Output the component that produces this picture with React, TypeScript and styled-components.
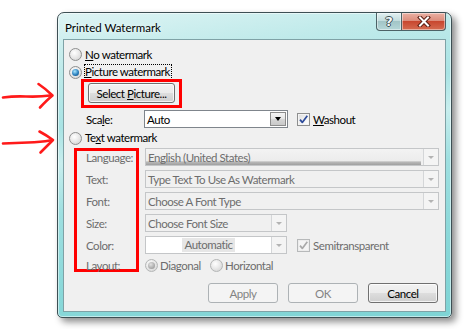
import React from "react";
import styled, { createGlobalStyle, css } from "styled-components";

const GlobalStyle = createGlobalStyle`
  html, body { margin: 0; padding: 0; background: #ffffff; }
  #root { width: 468px; height: 329px; overflow: hidden; }
`;

const FONT = `Lato, "Noto Sans", sans-serif`;

const Page = styled.div`
  position: relative;
  width: 468px;
  height: 329px;
  box-sizing: border-box;
  padding: 12px 0 0 57px;
  background: #ffffff;
  font-family: ${FONT};
  font-size: 11.5px;
  letter-spacing: -0.45px;
`;

const Annotations = styled.svg`
  position: absolute;
  left: 0;
  top: 0;
  width: 60px;
  height: 329px;
  pointer-events: none;
`;

const Window = styled.div`
  width: 395px;
  height: 306px;
  box-sizing: border-box;
  display: flex;
  flex-direction: column;
  padding: 0 5px 5px 5px;
  border: 1px solid #3d4f54;
  border-radius: 7px 7px 5px 5px;
  background: linear-gradient(
    172deg,
    #def4f4 0%,
    #bfeaea 16%,
    #a9e3e4 32%,
    #c8eeee 42%,
    #9edfe0 56%,
    #8ad8d9 78%,
    #7ed4d5 100%
  );
  box-shadow: inset 0 0 0 1px rgba(255, 255, 255, 0.5), 4px 4px 7px rgba(0, 0, 0, 0.45);
`;

const TitleBar = styled.div`
  height: 26px;
  display: flex;
  align-items: flex-start;
  justify-content: space-between;
`;

const Title = styled.div`
  font-size: 11.5px;
  line-height: 14px;
  letter-spacing: 0;
  color: #000;
  padding: 8px 0 0 2px;
  text-shadow: 0 0 5px rgba(255, 255, 255, 0.9);
`;

const CaptionButtons = styled.div`
  display: flex;
`;

const CaptionButton = styled.div<{ $variant: "help" | "close" }>`
  height: 18px;
  box-sizing: border-box;
  display: flex;
  align-items: center;
  justify-content: center;
  border: 1px solid #4c6266;
  border-top: none;
  box-shadow: inset 0 0 0 1px rgba(255, 255, 255, 0.45);
  ${(p) =>
    p.$variant === "help"
      ? css`
          width: 26px;
          border-radius: 0 0 0 4px;
          background: linear-gradient(#e2f0f1 0%, #c3dcdd 45%, #a2c5c7 50%, #b5d7d8 100%);
        `
      : css`
          width: 44px;
          border-left: none;
          border-radius: 0 0 4px 0;
          background: linear-gradient(#eab0a3 0%, #dc8d7c 45%, #c8472f 50%, #d56c51 100%);
        `}
`;

const HelpGlyph = styled.span`
  font-family: "DejaVu Sans", sans-serif;
  font-weight: bold;
  font-size: 13px;
  line-height: 13px;
  letter-spacing: 0;
  color: #f4f8f8;
  text-shadow: -1px 0 #3c5054, 1px 0 #3c5054, 0 -1px #3c5054, 0 1px #3c5054;
`;

const Client = styled.div`
  flex: 1;
  background: #f0f0f0;
  border: 1px solid #7fa2a6;
  padding: 6px 7px 0 5px;
  display: flex;
  flex-direction: column;
  color: #000;
`;

const OptionRow = styled.div<{ $h: number; $mt?: number }>`
  display: flex;
  align-items: center;
  gap: 2px;
  height: ${(p) => p.$h}px;
  margin-top: ${(p) => p.$mt ?? 0}px;
`;

const RadioCircle = styled.span<{ $checked?: boolean; $disabled?: boolean }>`
  width: 13px;
  height: 13px;
  box-sizing: border-box;
  border-radius: 50%;
  flex-shrink: 0;
  border: 1px solid ${(p) => (p.$disabled ? "#b4b6b6" : "#8e8f8f")};
  background: radial-gradient(circle at 40% 35%, #ffffff 0%, #eaeaea 45%, #cdcdcd 100%);
  display: flex;
  align-items: center;
  justify-content: center;
  &::after {
    content: "";
    width: 7px;
    height: 7px;
    border-radius: 50%;
    display: ${(p) => (p.$checked ? "block" : "none")};
    background: ${(p) =>
      p.$disabled
        ? "radial-gradient(circle at 40% 35%, #e2e2e2, #a4a4a4 70%, #8f8f8f)"
        : "radial-gradient(circle at 40% 35%, #a8e6ff, #2a7fbd 55%, #0d3f6b)"};
  }
`;

const OptionLabel = styled.span<{ $focused?: boolean; $disabled?: boolean }>`
  height: 16px;
  box-sizing: border-box;
  padding: 0 1px 0 0;
  line-height: 14px;
  display: flex;
  align-items: center;
  border: 1px ${(p) => (p.$focused ? "dotted #000" : "solid transparent")};
  color: ${(p) => (p.$disabled ? "#6d6d6d" : "#000")};
  white-space: nowrap;
`;

const Key = styled.span`
  text-decoration: underline;
  text-underline-offset: 1px;
`;

const Highlight = styled.div<{ $w: number; $h: number; $ml: number; $mt?: number }>`
  box-sizing: border-box;
  width: ${(p) => p.$w}px;
  height: ${(p) => p.$h}px;
  margin-left: ${(p) => p.$ml}px;
  margin-top: ${(p) => p.$mt ?? 0}px;
  border: 3px solid #ff0000;
  flex-shrink: 0;
`;

const PictureBox = styled(Highlight)`
  padding: 1px 0 0 4px;
`;

const PushButton = styled.div<{ $w: number; $disabled?: boolean }>`
  width: ${(p) => p.$w}px;
  height: 20px;
  box-sizing: border-box;
  border-radius: 3px;
  display: flex;
  align-items: center;
  justify-content: center;
  white-space: nowrap;
  ${(p) =>
    p.$disabled
      ? css`
          border: 1px solid #adb2b5;
          background: #f4f4f4;
          color: #838383;
        `
      : css`
          border: 1px solid #707070;
          background: linear-gradient(#f2f2f2 0%, #ebebeb 48%, #dddddd 52%, #cfcfcf 100%);
          box-shadow: inset 0 0 0 1px rgba(255, 255, 255, 0.75);
          color: #000;
        `}
`;

const FieldRow = styled.div<{ $mt?: number }>`
  display: flex;
  align-items: center;
  height: 18px;
  margin-top: ${(p) => p.$mt ?? 0}px;
`;

const FieldLabel = styled.span<{ $w: number; $ml: number }>`
  width: ${(p) => p.$w}px;
  margin-left: ${(p) => p.$ml}px;
  white-space: nowrap;
`;

type ComboTone = "enabled" | "disabled" | "list" | "white";

const Combo = styled.div<{ $w: number; $tone: ComboTone }>`
  width: ${(p) => p.$w}px;
  height: 18px;
  box-sizing: border-box;
  display: flex;
  flex-shrink: 0;
  border: 1px solid ${(p) => (p.$tone === "enabled" ? "#7f858c" : "#c4c6c8")};
  background: ${(p) => (p.$tone === "enabled" || p.$tone === "white" ? "#ffffff" : "#f0f0f0")};
  color: ${(p) => (p.$tone === "enabled" ? "#000" : "#6d6d6d")};
`;

const ComboText = styled.div<{ $tone: ComboTone }>`
  flex: 1;
  display: flex;
  align-items: center;
  padding-left: 2px;
  white-space: nowrap;
  overflow: hidden;
  ${(p) =>
    p.$tone === "list" &&
    css`
      background: linear-gradient(#f3f3f3 0%, #ececec 72%, #b8b8b8 82%, #9f9f9f 100%);
      margin-right: 2px;
    `}
  ${(p) =>
    p.$tone === "white" &&
    css`
      justify-content: center;
      padding-left: 0;
    `}
`;

const ColorName = styled.span`
  background: #e6e6e6;
  padding: 0 2px;
  line-height: 14px;
`;

const ComboArrow = styled.div<{ $enabled?: boolean }>`
  width: 15px;
  box-sizing: border-box;
  display: flex;
  align-items: center;
  justify-content: center;
  ${(p) =>
    p.$enabled
      ? css`
          border: 1px solid #8c8c8c;
          margin: 1px;
          width: 16px;
          background: linear-gradient(#f4f4f4 0%, #e6e6e6 48%, #d6d6d6 52%, #c9c9c9 100%);
          &::after {
            content: "";
            border-left: 3.5px solid transparent;
            border-right: 3.5px solid transparent;
            border-top: 4px solid #000;
          }
        `
      : css`
          border-left: 1px solid #d4d6d8;
          background: #f4f4f4;
          &::after {
            content: "";
            border-left: 3px solid transparent;
            border-right: 3px solid transparent;
            border-top: 3px solid #b3b3b3;
          }
        `}
`;

const CheckBox = styled.span<{ $disabled?: boolean; $ml: number }>`
  width: 13px;
  height: 13px;
  box-sizing: border-box;
  flex-shrink: 0;
  margin-left: ${(p) => p.$ml}px;
  border: 1px solid ${(p) => (p.$disabled ? "#b7b9ba" : "#8e8f8f")};
  background: ${(p) =>
    p.$disabled ? "#f4f4f4" : "linear-gradient(135deg, #dcdcdc 0%, #f4f4f4 60%, #ffffff 100%)"};
  box-shadow: inset 0 0 0 1px ${(p) => (p.$disabled ? "#ececec" : "#f4f4f4")};
  display: flex;
  align-items: center;
  justify-content: center;
`;

const CheckLabel = styled.span<{ $disabled?: boolean }>`
  margin-left: 3px;
  color: ${(p) => (p.$disabled ? "#6d6d6d" : "#000")};
  white-space: nowrap;
`;

const TextSection = styled.div`
  display: flex;
  margin-top: 1px;
`;

const LabelsBox = styled(Highlight)`
  padding-left: 9px;
  display: flex;
  flex-direction: column;
`;

const LabelList = styled.div`
  margin-top: -3px;
  display: flex;
  flex-direction: column;
  gap: 4px;
`;

const DisabledLabel = styled.div<{ $h: number }>`
  height: ${(p) => p.$h}px;
  display: flex;
  align-items: center;
  color: #6d6d6d;
  white-space: nowrap;
`;

const Fields = styled.div`
  margin-left: 6px;
  display: flex;
  flex-direction: column;
  gap: 4px;
`;

const InlineRow = styled.div<{ $h: number }>`
  display: flex;
  align-items: center;
  height: ${(p) => p.$h}px;
`;

const RadioGroupItem = styled.div<{ $w?: number }>`
  display: flex;
  align-items: center;
  gap: 2px;
  width: ${(p) => (p.$w ? `${p.$w}px` : "auto")};
  color: #6d6d6d;
`;

const ButtonBar = styled.div`
  display: flex;
  justify-content: flex-end;
  gap: 10px;
  margin-top: 11px;
`;

const CheckMark: React.FC<{ color: string }> = ({ color }) => (
  <svg width="11" height="11" viewBox="0 0 11 11">
    <path d="M2 5.6 L4.3 8.4 L9.3 1.8" fill="none" stroke={color} strokeWidth="1.7" strokeLinejoin="round" />
  </svg>
);

const CloseGlyph = () => (
  <svg width="14" height="11" viewBox="0 0 14 11">
    <path d="M3 1.5 L11 9.5 M11 1.5 L3 9.5" stroke="#5a1d12" strokeWidth="4" strokeLinecap="square" />
    <path d="M3 1.5 L11 9.5 M11 1.5 L3 9.5" stroke="#ffffff" strokeWidth="2" strokeLinecap="square" />
  </svg>
);

export default function App() {
  return (
    <>
      <GlobalStyle />
      <Page>
        <Window>
          <TitleBar>
            <Title>Printed Watermark</Title>
            <CaptionButtons>
              <CaptionButton $variant="help">
                <HelpGlyph>?</HelpGlyph>
              </CaptionButton>
              <CaptionButton $variant="close">
                <CloseGlyph />
              </CaptionButton>
            </CaptionButtons>
          </TitleBar>
          <Client>
            <OptionRow $h={17}>
              <RadioCircle />
              <OptionLabel>
                <Key>N</Key>o watermark
              </OptionLabel>
            </OptionRow>
            <OptionRow $h={16} $mt={1}>
              <RadioCircle $checked />
              <OptionLabel $focused>
                <Key>P</Key>icture watermark
              </OptionLabel>
            </OptionRow>
            <PictureBox $w={101} $h={29} $ml={12} $mt={-1}>
              <PushButton $w={87}>
                Select&nbsp;<Key>P</Key>icture...
              </PushButton>
            </PictureBox>
            <FieldRow $mt={2}>
              <FieldLabel $w={58} $ml={17}>
                Sca<Key>l</Key>e:
              </FieldLabel>
              <Combo $w={144} $tone="enabled">
                <ComboText $tone="enabled">Auto</ComboText>
                <ComboArrow $enabled />
              </Combo>
              <CheckBox $ml={9}>
                <CheckMark color="#2c4a9a" />
              </CheckBox>
              <CheckLabel>
                <Key>W</Key>ashout
              </CheckLabel>
            </FieldRow>
            <OptionRow $h={18} $mt={1}>
              <RadioCircle />
              <OptionLabel>
                Te<Key>x</Key>t watermark
              </OptionLabel>
            </OptionRow>
            <TextSection>
              <LabelsBox $w={65} $h={124} $ml={5}>
                <LabelList>
                  <DisabledLabel $h={18}>Language:</DisabledLabel>
                  <DisabledLabel $h={18}>Text:</DisabledLabel>
                  <DisabledLabel $h={18}>Font:</DisabledLabel>
                  <DisabledLabel $h={18}>Size:</DisabledLabel>
                  <DisabledLabel $h={18}>Color:</DisabledLabel>
                  <DisabledLabel $h={14}>Layout:</DisabledLabel>
                </LabelList>
              </LabelsBox>
              <Fields>
                <Combo $w={294} $tone="list">
                  <ComboText $tone="list">English (United States)</ComboText>
                  <ComboArrow />
                </Combo>
                <Combo $w={294} $tone="disabled">
                  <ComboText $tone="disabled">Type Text To Use As Watermark</ComboText>
                  <ComboArrow />
                </Combo>
                <Combo $w={294} $tone="disabled">
                  <ComboText $tone="disabled">Choose A Font Type</ComboText>
                  <ComboArrow />
                </Combo>
                <Combo $w={142} $tone="disabled">
                  <ComboText $tone="disabled">Choose Font Size</ComboText>
                  <ComboArrow />
                </Combo>
                <InlineRow $h={18}>
                  <Combo $w={142} $tone="white">
                    <ComboText $tone="white">
                      <ColorName>Automatic</ColorName>
                    </ComboText>
                    <ComboArrow />
                  </Combo>
                  <CheckBox $disabled $ml={10}>
                    <CheckMark color="#a9a9a9" />
                  </CheckBox>
                  <CheckLabel $disabled>Semitransparent</CheckLabel>
                </InlineRow>
                <InlineRow $h={14}>
                  <RadioGroupItem $w={65}>
                    <RadioCircle $checked $disabled />
                    Diagonal
                  </RadioGroupItem>
                  <RadioGroupItem>
                    <RadioCircle $disabled />
                    Horizontal
                  </RadioGroupItem>
                </InlineRow>
              </Fields>
            </TextSection>
            <ButtonBar>
              <PushButton $w={70} $disabled>
                Apply
              </PushButton>
              <PushButton $w={70} $disabled>
                OK
              </PushButton>
              <PushButton $w={70}>Cancel</PushButton>
            </ButtonBar>
          </Client>
        </Window>
        <Annotations viewBox="0 0 60 329">
          <g fill="none" stroke="#ff1a1a" strokeWidth="2.6" strokeLinecap="round" strokeLinejoin="round">
            <path d="M3 97.5 Q14 96 26 96.5 Q40 97 50 95.5" />
            <path d="M38.5 84 Q46 89 52.5 95.5 Q47 100 40 107.5" />
            <path d="M3 143.5 Q15 143 28 142.5 Q41 142 50 140.5" />
            <path d="M39.5 131.5 Q47 135.5 53 140 Q47 146 40.5 152.5" />
          </g>
        </Annotations>
      </Page>
    </>
  );
}
